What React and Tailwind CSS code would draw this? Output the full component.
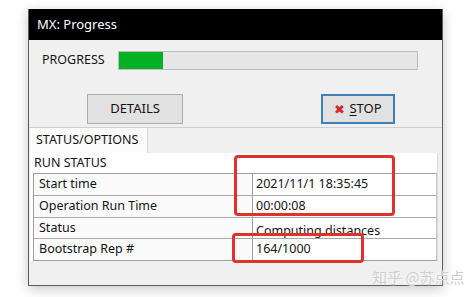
import React from "react";

const rows = [
  ["Start time", "2021/11/1 18:35:45", "h-[21px]"],
  ["Operation Run Time", "00:00:08", "h-[22px]"],
  ["Status", "Computing distances", "h-[21px]"],
  ["Bootstrap Rep #", "164/1000", "h-[22px]"],
];

export default function App() {
  return (
    <div className="relative w-[474px] h-[297px] bg-white overflow-hidden text-[#141414] [font-family:'Noto_Sans','Open_Sans',sans-serif]">
      <div className="absolute left-[28px] top-[9px] w-[415px] h-[277px] flex flex-col bg-[#f0f0f0] border-x border-b border-[#5c5c5c] shadow-[0_3px_12px_rgba(0,0,0,0.22)]">
        {/* title bar */}
        <div className="h-[31px] bg-black text-white text-[13px] flex items-center pl-[8px] shrink-0">
          MX: Progress
        </div>

        {/* progress */}
        <div className="flex items-center mt-[11px] h-[19px]">
          <span className="text-[12.5px] ml-[13px] w-[76px]">PROGRESS</span>
          <div className="w-[300px] h-[19px] bg-[#e6e6e6] border border-[#bcbcbc] flex">
            <div className="w-[44px] h-full bg-[#06b025]" />
          </div>
        </div>

        {/* buttons */}
        <div className="flex items-center mt-[24px] h-[30px]">
          <button className="ml-[58px] w-[96px] h-[30px] bg-[#e1e1e1] border border-[#adadad] text-[13px]">
            DETAILS
          </button>
          <button className="ml-[138px] w-[74px] h-[30px] bg-[#e1e1e1] border-2 border-[#3f7fb6] text-[13px] flex items-center justify-center gap-[4px]">
            <span className="text-[#d4282a] text-[13px] leading-none">✖</span>
            <span>
              <span className="underline underline-offset-2">S</span>TOP
            </span>
          </button>
        </div>

        {/* tab strip */}
        <div className="mt-[3px] border-t border-[#cfcfcf] h-[26px] flex">
          <div className="ml-[1px] w-[118px] h-full bg-[#fbfbfb] border-r border-[#d9d9d9] text-[12.5px] flex items-center pl-[6px]">
            STATUS/OPTIONS
          </div>
        </div>

        {/* tab panel */}
        <div className="flex-1 mx-[1px] mr-[4px] flex flex-col">
          <div className="bg-white border-r border-[#d9d9d9] h-[20px] flex items-center pl-[4px] text-[12.5px]">
            RUN STATUS
          </div>
          <div className="bg-white border-r border-[#d9d9d9] pl-[3px]">
            <div className="border border-[#a0a0a0] border-r-[#c8c8c8]">
              {rows.map(([label, value, h], i) => (
                <div
                  key={label}
                  className={`flex ${h} ${i > 0 ? "border-t border-[#a8a8a8]" : ""}`}
                >
                  <div className="w-[219px] border-r border-[#a0a0a0] bg-[#fafafa] pl-[5px] flex items-center text-[12.5px]">
                    {label}
                  </div>
                  <div className="flex-1 pl-[3px] flex items-center text-[12.5px] overflow-hidden">
                    <span className={i === 2 ? "translate-y-[3px]" : ""}>{value}</span>
                  </div>
                </div>
              ))}
            </div>
          </div>
          <div className="flex-1 bg-[#f0f0f0]" />
        </div>
      </div>

      {/* red annotation boxes */}
      <div className="absolute left-[234px] top-[155px] w-[161px] h-[61px] border-[3px] border-[#e0312c] rounded-[4px]" />
      <div className="absolute left-[232px] top-[233px] w-[132px] h-[30px] border-[3px] border-[#e0312c] rounded-[4px]" />

      {/* watermark */}
      <div className="absolute left-[372px] top-[266px] text-[15px] text-[#cfcfcf] [text-shadow:0_0_2px_#fff] [font-family:'Noto_Sans_CJK_SC',sans-serif]">
        知乎 @苏点点
      </div>
    </div>
  );
}
